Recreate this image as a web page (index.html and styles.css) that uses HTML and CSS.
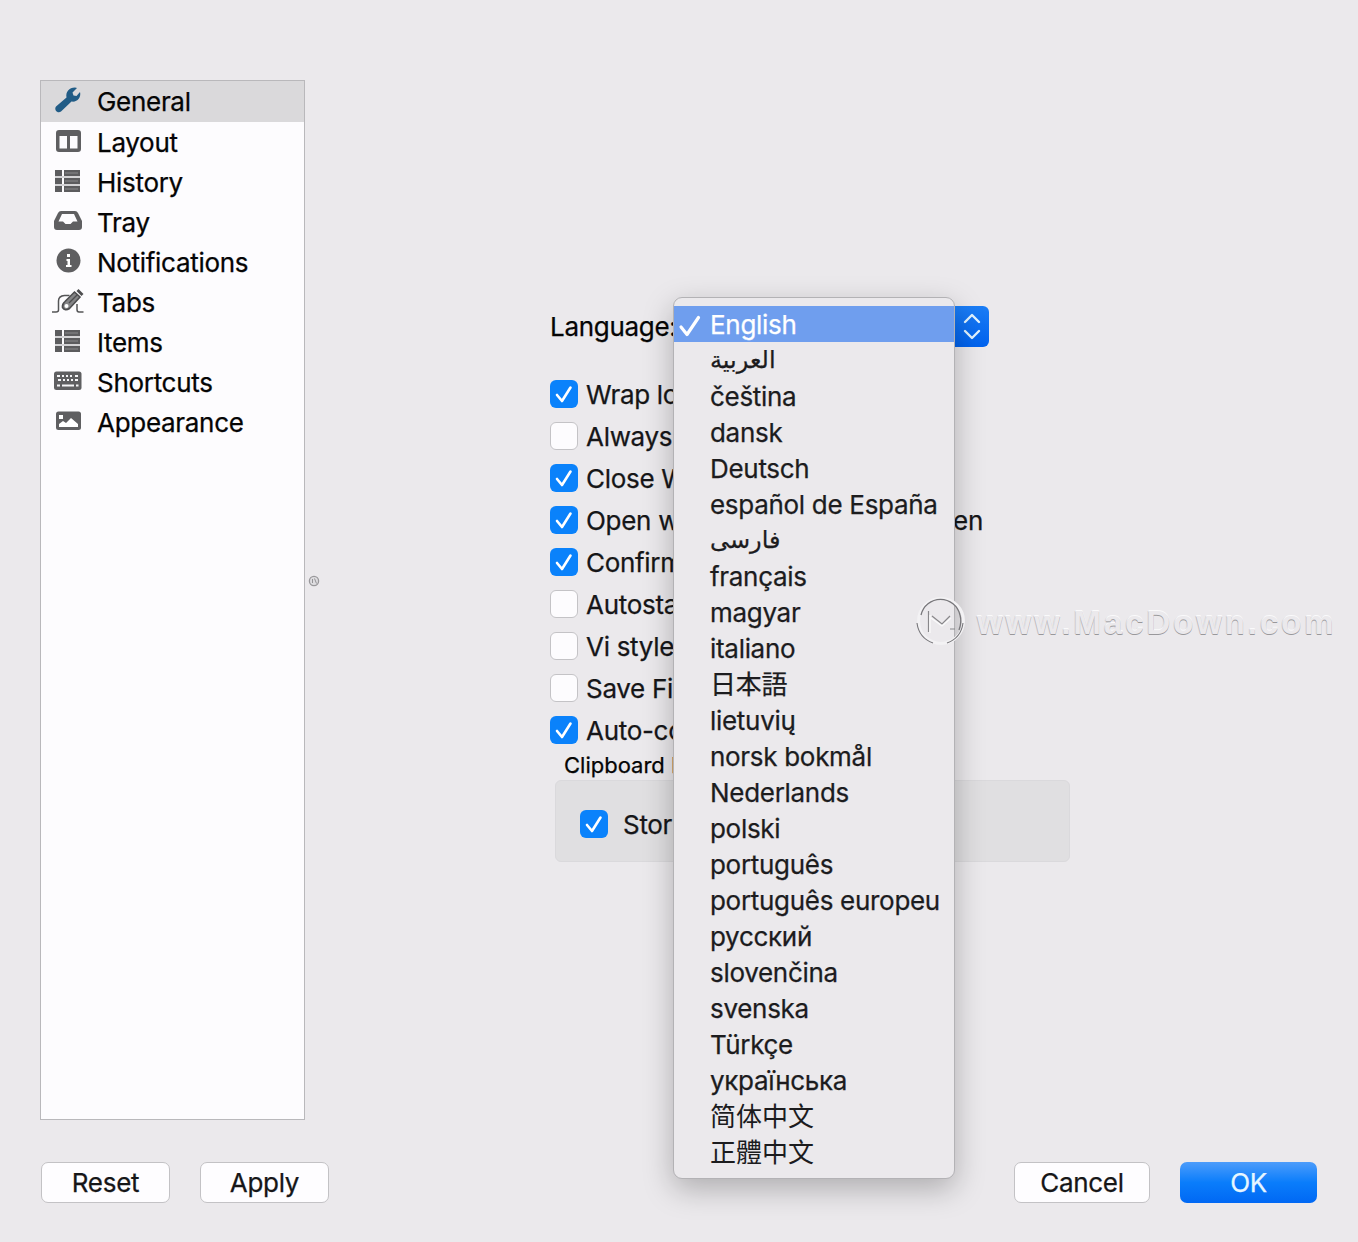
FILE: index.html
```html
<!DOCTYPE html>
<html lang="en">
  <head>
    <meta charset="utf-8">
    <title>Preferences</title>
    <link rel="stylesheet" href="styles.css">
  </head>
  <body>
    <svg class="symbols" width="0" height="0">
      <symbol id="check" viewBox="0 0 28 28">
        <path d="M7 15l5 6L20.500 7.500" fill="none" stroke="currentColor" stroke-width="2.600" stroke-linecap="round" stroke-linejoin="round"/>
      </symbol>
      <symbol id="list" viewBox="0 0 32 28">
        <path d="M3 3h7v6H3zM12 3h16v6H12zM3 11h7v6H3zM12 11h16v6H12zM3 19h7v6H3zM12 19h16v6H12z" fill="#5c5c5e"/>
        <path d="M13 6h13M13 14h13M13 22h13" stroke="#8a8a8c" stroke-width="1"/>
        <path d="M3 10h25M3 18h25" stroke="#a9a9ab" stroke-width="1"/>
      </symbol>
    </svg>
    <div class="dialog">
      <div class="main">
        <ul class="sidebar">
          <li class="active">
            <svg class="icon" viewBox="0 0 32 28"><path d="M4 20.500L14.500 11.500C13.500 6 17 1.500 23 1.500L25 2L20.500 6.500L21.500 9.500L24.500 10L28 6C29.500 11.500 25 16.500 19.500 15.500L9 25.500C6 28 1.500 24 4 20.500Z" fill="#215c86"/></svg>
            <span>General</span>
          </li>
          <li>
            <svg class="icon" viewBox="0 0 32 28"><path fill-rule="evenodd" d="M7 3h19q3 0 3 3v16q0 3-3 3H7q-3 0-3-3V6q0-3 3-3zM7.500 9v12.500h7.500V9zM18 9v12.500h7.500V9z" fill="#5f5f61"/></svg>
            <span>Layout</span>
          </li>
          <li>
            <svg class="icon"><use href="#list"/></svg>
            <span>History</span>
          </li>
          <li>
            <svg class="icon" viewBox="0 0 32 28"><path fill-rule="evenodd" d="M9 4h14q2 0 3 2l4 8v6q0 3-3 3H5q-3 0-3-3v-6l4-8q1-2 3-2zM10 7L6.500 14.500H11L13.500 17h5L21 14.500h4.500L22 7z" fill="#5f5f61"/></svg>
            <span>Tray</span>
          </li>
          <li>
            <svg class="icon" viewBox="0 0 32 28"><circle cx="16.500" cy="13.500" r="12" fill="#5f5f61"/><path d="M15 7h3v3h-3zM14.500 12H18v6h1.500v2H14v-2h1.500v-4h-1z" fill="#fff"/></svg>
            <span>Notifications</span>
          </li>
          <li>
            <svg class="icon" viewBox="0 0 32 28"><path d="M0 25h4q2.500 0 2.500-2V14q0-5 6-5.500h5M25 17v5.500q0 2.500 2 2.500h4.500" fill="none" stroke="#555557" stroke-width="1.500"/><path d="M10.500 20.500Q10 17 13 14.500L22.500 5l5.500 5-10.500 11.500Q13 24.500 10.500 20.500z" fill="#858587" stroke="#4d4d4f" stroke-width="1.600"/><path d="M24.500 4l2-2 5 5-2 2z" fill="#4d4d4f"/><circle cx="14.500" cy="19" r="2" fill="#fff"/><path d="M17 16l8-8" stroke="#4d4d4f" stroke-width="1.200"/></svg>
            <span>Tabs</span>
          </li>
          <li>
            <svg class="icon"><use href="#list"/></svg>
            <span>Items</span>
          </li>
          <li>
            <svg class="icon" viewBox="0 0 32 28"><rect x="2" y="4.500" width="27.500" height="18.500" rx="2.500" fill="#5f5f61"/><path d="M5 9h3M10 9h2M14 9h2M18 9h2M23 9h3M6 13h3M11 13h2M15 13h2M19 13h2M23 13h3M5 18.500h3M10 18.500h12M24 18.500h2.500" stroke="#f5f5f7" stroke-width="2"/></svg>
            <span>Shortcuts</span>
          </li>
          <li>
            <svg class="icon" viewBox="0 0 32 28"><rect x="4" y="4.500" width="25" height="18.500" rx="2.500" fill="#5f5f61"/><path d="M7 8h4v4H7zM7 20v-3l4-3 3 2 5-5 7 6v3z" fill="#fff"/></svg>
            <span>Appearance</span>
          </li>
        </ul>
        <div class="splitter">
          <svg width="12" height="12" viewBox="0 0 12 12"><circle cx="6" cy="6" r="4.600" fill="#dedde0" stroke="#99989b" stroke-width="1.300"/><path d="M4.500 4v4M6.500 3.500l2 5" stroke="#949396" stroke-width="1"/></svg>
        </div>
        <div class="settings">
          <div class="language">
            <label>Language:</label>
            <div class="select">
              <svg width="34" height="41" viewBox="0 0 34 41"><path d="M10 16l7-7 7 7M10 25l7 7 7-7" fill="none" stroke="#e2f4ff" stroke-width="2.400" stroke-linecap="round" stroke-linejoin="round"/></svg>
              <ul class="menu">
                <li class="selected"><svg class="tick" viewBox="0 0 28 28"><path d="M5 16l6 7.500L22.500 6.500" fill="none" stroke="#fff" stroke-width="3.200" stroke-linecap="round" stroke-linejoin="round"/></svg>English</li>
                <li class="arabic" lang="ar">العربية</li>
                <li>čeština</li>
                <li>dansk</li>
                <li>Deutsch</li>
                <li>español de España</li>
                <li class="arabic" lang="fa">فارسی</li>
                <li>français</li>
                <li>magyar</li>
                <li>italiano</li>
                <li lang="ja">日本語</li>
                <li>lietuvių</li>
                <li>norsk bokmål</li>
                <li>Nederlands</li>
                <li>polski</li>
                <li>português</li>
                <li>português europeu</li>
                <li>русский</li>
                <li>slovenčina</li>
                <li>svenska</li>
                <li>Türkçe</li>
                <li>українська</li>
                <li class="hans" lang="zh-Hans">简体中文</li>
                <li class="hant" lang="zh-Hant">正體中文</li>
              </ul>
            </div>
          </div>
          <div class="options">
            <div class="option"><svg class="box checked"><use href="#check"/></svg><span>Wrap lo</span></div>
            <div class="option"><i class="box"></i><span>Always</span></div>
            <div class="option"><svg class="box checked"><use href="#check"/></svg><span>Close W</span></div>
            <div class="option"><svg class="box checked"><use href="#check"/></svg><span>Open w</span><span class="end">en</span></div>
            <div class="option"><svg class="box checked"><use href="#check"/></svg><span>Confirm</span></div>
            <div class="option"><i class="box"></i><span>Autosta</span></div>
            <div class="option"><i class="box"></i><span>Vi style</span></div>
            <div class="option"><i class="box"></i><span>Save Fi</span></div>
            <div class="option"><svg class="box checked"><use href="#check"/></svg><span>Auto-co</span></div>
          </div>
          <div class="group-title">Clipboard M</div>
          <div class="group">
            <svg class="box checked"><use href="#check"/></svg><span>Stor</span>
          </div>
        </div>
      </div>
      <div class="footer">
        <button class="button">Reset</button>
        <button class="button">Apply</button>
        <button class="button cancel">Cancel</button>
        <button class="button ok">OK</button>
      </div>
      <div class="watermark">
        <svg width="52" height="52" viewBox="0 0 52 52" fill="none">
          <circle cx="26" cy="26" r="22.500" stroke="#f3f2f4" stroke-width="3"/>
          <path d="M6 20A20 20 0 0 1 45 20M45 20q2 7-1 15" stroke="#77767a" stroke-width="1.300"/>
          <path d="M2 28q2 15 16 20M48 28q-2 15-16 20" stroke="#77767a" stroke-width="1.100"/>
          <path d="M13.500 37V16M17 21l10 8 8-8M35 34h5" stroke="#88878a" stroke-width="1.200"/>
          <path d="M15 38V20M16 23l11 8 9-8" stroke="#fafafb" stroke-width="1.300"/>
        </svg>
        <span>www.MacDown.com</span>
      </div>
    </div>
  </body>
</html>
```
FILE: styles.css
```css
* {
  box-sizing: border-box;
}

body {
  margin: 0;
  background-color: #ebe9ec;
  color: #161618;
  font-family: Inter, "Noto Sans", "Noto Sans CJK JP", sans-serif;
  font-size: 26px;
  line-height: 36px;
  letter-spacing: -0.3px;
  -webkit-text-stroke: 0.25px;
}

ul {
  list-style: none;
  margin: 0;
  padding: 0;
}

.symbols {
  position: absolute;
}

.dialog {
  position: relative;
  height: 1242px;
  padding: 80px 41px 39px 40px;
  display: flex;
  flex-direction: column;
  justify-content: space-between;
  overflow: hidden;
}

.main {
  display: flex;
  height: 1040px;
}

.sidebar {
  width: 265px;
  border: 1px solid #b9b8bb;
  background-color: #fdfcfe;
  color: #050505;
}

.sidebar li {
  display: flex;
  align-items: center;
  height: 40px;
  padding-left: 11px;
}

.sidebar li.active {
  height: 41px;
  background-color: #dad9db;
}

.sidebar span {
  padding-top: 1px;
}

.icon {
  width: 32px;
  height: 28px;
  margin-right: 13px;
  margin-bottom: 3px;
}

.splitter {
  display: flex;
  align-items: center;
  width: 17px;
  padding-left: 3px;
  padding-bottom: 38px;
}

.settings {
  width: 520px;
  margin-left: 228px;
  padding-top: 226px;
}

.language {
  display: flex;
  justify-content: space-between;
  align-items: center;
  width: 439px;
  height: 41px;
  color: #050505;
}

.language label {
  width: 123px;
  padding-top: 1px;
  white-space: nowrap;
}

.select {
  position: relative;
  display: flex;
  flex: none;
  justify-content: flex-end;
  width: 316px;
  height: 41px;
  border-radius: 6px;
  background: linear-gradient(#1b7df5, #0062ee);
}

.menu {
  position: absolute;
  top: -9px;
  left: 0;
  width: 282px;
  padding: 8px 0;
  border: 1px solid #b3b2b5;
  border-radius: 9px;
  background-color: #ebe9ec;
  box-shadow: 0 10px 30px rgba(0, 0, 0, 0.26);
  color: #1c1c1e;
}

.menu li {
  display: flex;
  align-items: center;
  height: 36px;
  padding-top: 2px;
  padding-left: 36px;
  white-space: nowrap;
}

.menu li.selected {
  padding-left: 2px;
  background-color: #6f9eee;
  color: #fff;
}

.menu li.arabic {
  padding-top: 0;
  font-family: "DejaVu Sans", sans-serif;
  font-size: 24px;
  letter-spacing: 0;
}

.menu li.hans,
.menu li.hant {
  padding-top: 0;
  padding-bottom: 2px;
  font-family: "Noto Sans CJK SC", sans-serif;
  letter-spacing: 0;
  -webkit-text-stroke: 0;
}

.menu li.hant {
  font-family: "Noto Sans CJK TC", sans-serif;
}

.tick {
  width: 28px;
  height: 28px;
  margin-right: 6px;
}

.options {
  margin-top: 26px;
}

.option {
  display: flex;
  align-items: center;
  gap: 8px;
  width: 433px;
  height: 42px;
}

.option span {
  padding-top: 2px;
}

.option .end {
  margin-left: auto;
}

.box {
  flex: none;
  width: 28px;
  height: 28px;
  border: 1px solid #c4c3c6;
  border-radius: 6px;
  background-color: #fdfcfe;
}

.box.checked {
  border: none;
  background-color: #0a82fb;
  color: #fff;
}

.group-title {
  height: 29px;
  padding-left: 14px;
  font-size: 22px;
  line-height: 28px;
  letter-spacing: 0;
  color: #050505;
}

.group {
  display: flex;
  align-items: center;
  gap: 15px;
  width: 515px;
  height: 82px;
  margin-left: 5px;
  padding: 6px 0 0 24px;
  border: 1px solid #dad9dc;
  border-radius: 6px;
  background-color: #e0dfe1;
}

.group span {
  padding-top: 2px;
}

.footer {
  display: flex;
  height: 41px;
}

.button {
  width: 129px;
  height: 41px;
  margin: 0 29px 0 1px;
  padding: 0;
  border: 1px solid #c3c2c5;
  border-radius: 7px;
  background-color: #fefdff;
  color: #161618;
  font-family: inherit;
  font-size: 26px;
  line-height: 36px;
  letter-spacing: -0.3px;
}

.button.cancel {
  width: 136px;
  margin-left: auto;
}

.button.ok {
  width: 137px;
  margin-right: 0;
  border: none;
  background: linear-gradient(#4c9cfb, #0a7dfb 50%, #0068f4);
  color: #e6f6ff;
}

.watermark {
  position: absolute;
  top: 595px;
  left: 915px;
  display: flex;
  align-items: center;
  gap: 10px;
  font-family: "Liberation Sans", sans-serif;
  font-size: 33px;
  font-weight: bold;
  letter-spacing: 2.9px;
  color: #ebe9ec;
  text-shadow: 0 1px 0 #99989b, 0 -1px 0 #fafafb, -1px 0 0 #d0cfd2;
  -webkit-text-stroke: 0;
}

.watermark span {
  padding-top: 4px;
}
```
